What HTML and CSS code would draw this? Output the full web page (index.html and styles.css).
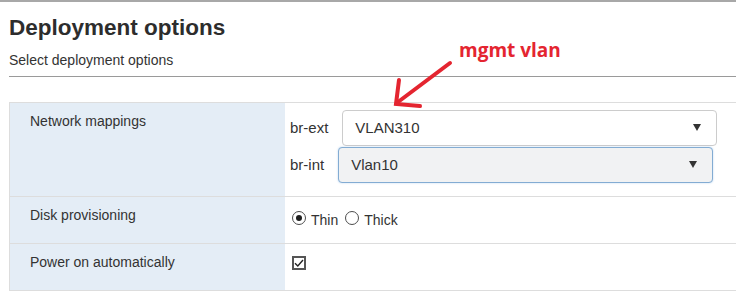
FILE: index.html
```html
<!DOCTYPE html>
<html lang="en">
<head>
    <meta charset="utf-8">
    <title>Deployment options</title>
    <link rel="stylesheet" href="styles.css">
</head>
<body>
    <div class="topbar"></div>
    <div class="page">
        <h1 class="page__title">Deployment options</h1>
        <div class="page__subtitle">Select deployment options</div>
        <hr class="page__rule">

        <div class="options">
            <div class="options__label options__row--mappings">Network mappings</div>
            <div class="options__value options__row--mappings">
                <div class="mapping">
                    <span class="mapping__name">br-ext</span>
                    <div class="fake-select">
                        <span>VLAN310</span>
                        <span class="fake-select__caret"></span>
                    </div>
                </div>
                <div class="mapping">
                    <span class="mapping__name">br-int</span>
                    <div class="fake-select fake-select--focus">
                        <span>Vlan10</span>
                        <span class="fake-select__caret"></span>
                    </div>
                </div>
            </div>

            <div class="options__label options__row--short">Disk provisioning</div>
            <div class="options__value options__row--short options__value--inline">
                <span class="radio radio--checked"></span><span class="radio-label">Thin</span>
                <span class="radio"></span><span class="radio-label">Thick</span>
            </div>

            <div class="options__label options__row--short">Power on automatically</div>
            <div class="options__value options__row--short">
                <span class="checkbox">
                    <svg width="10" height="10" viewBox="0 0 10 10"><path d="M1 5.2 L3.8 8 L9 2" fill="none" stroke="#222" stroke-width="1.4"/></svg>
                </span>
            </div>
        </div>
    </div>

    <!-- screenshot annotation drawn on top -->
    <div class="annotation">
        <span class="annotation__text">mgmt vlan</span>
        <svg class="annotation__arrow" width="736" height="305" viewBox="0 0 736 305">
            <g stroke="#e42530" stroke-width="4" stroke-linecap="round" fill="none">
                <path d="M450 63 L398 102"/>
                <path d="M399 80 L396 104 L420 106"/>
            </g>
        </svg>
    </div>
</body>
</html>
```

FILE: styles.css
```css
:root {
    --text: #333333;
    --table-border: #dddddd;
    --label-bg: #e4edf6;
    --select-border: #cccccc;
    --focus-border: #83acd3;
    --annotation-red: #e42530;
}

html, body {
    margin: 0;
    padding: 0;
    font-family: "Liberation Sans", Arial, sans-serif;
    color: var(--text);
    background: #ffffff;
    overflow: hidden;
}

.topbar {
    height: 2px;
    background-color: #a8a8a8;
}

.page {
    padding: 13px 0 0 9px;
}

.page__title {
    margin: 0;
    font-size: 22.5px;
    line-height: 26px;
    font-weight: bold;
    color: #2d2d2d;
}

.page__subtitle {
    margin-top: 9px;
    font-size: 14px;
    line-height: 20px;
}

.page__rule {
    margin: 6px 0 0 0;
    border: 0;
    border-top: 1px solid #9a9a9a;
    height: 0;
}

.options {
    margin-top: 25px;
    display: grid;
    grid-template-columns: 275px 1fr;
    border-top: 1px solid var(--table-border);
    border-left: 1px solid var(--table-border);
    font-size: 14px;
    line-height: 20px;
}

.options__label,
.options__value {
    box-sizing: border-box;
    border-bottom: 1px solid var(--table-border);
}

.options__label {
    background-color: var(--label-bg);
    padding: 8px 0 0 20px;
}

.options__value {
    padding: 12px 0 0 7px;
}

.options__row--mappings {
    height: 94px;
}

.options__row--short {
    height: 47px;
}

.options__value.options__row--mappings {
    padding: 6px 0 0 5px;
}

.options__value--inline {
    display: flex;
    align-items: flex-start;
    padding-top: 13px;
}

/* network mapping rows */
.mapping {
    display: flex;
    align-items: center;
    height: 37px;
}

.mapping__name {
    font-size: 15px;
    margin-right: 14px;
}

.fake-select {
    box-sizing: border-box;
    width: 375px;
    height: 36px;
    display: flex;
    align-items: center;
    justify-content: space-between;
    padding: 0 15px 0 12px;
    border: 1px solid var(--select-border);
    border-radius: 4px;
    background-color: #ffffff;
    font-size: 15px;
}

.fake-select--focus {
    background-color: #f1f2f3;
    border-color: var(--focus-border);
    box-shadow: 0 0 2px rgba(102, 160, 220, 0.45);
}

.fake-select__caret {
    width: 0;
    height: 0;
    border-left: 4px solid transparent;
    border-right: 4px solid transparent;
    border-top: 7px solid #333333;
}

/* radios and checkbox */
.radio {
    box-sizing: border-box;
    width: 14px;
    height: 14px;
    margin-top: 1px;
    border: 1px solid #4d4d4d;
    border-radius: 50%;
    margin-right: 5px;
    display: flex;
    align-items: center;
    justify-content: center;
}

.radio--checked::after {
    content: "";
    width: 6px;
    height: 6px;
    border-radius: 50%;
    background-color: #1e1e1e;
}

.radio-label {
    margin-right: 7px;
}

.checkbox {
    box-sizing: border-box;
    display: flex;
    align-items: center;
    justify-content: center;
    width: 14px;
    height: 14px;
    border: 2px solid #555555;
}

/* red annotation over the screenshot */
.annotation {
    position: absolute;
    left: 0;
    top: 0;
    width: 736px;
    height: 305px;
    pointer-events: none;
}

.annotation__text {
    position: absolute;
    left: 459px;
    top: 39px;
    font-family: "Open Sans", Lato, sans-serif;
    font-weight: bold;
    font-size: 19px;
    line-height: 22px;
    color: var(--annotation-red);
}

.annotation__arrow {
    position: absolute;
    left: 0;
    top: 0;
}
```
